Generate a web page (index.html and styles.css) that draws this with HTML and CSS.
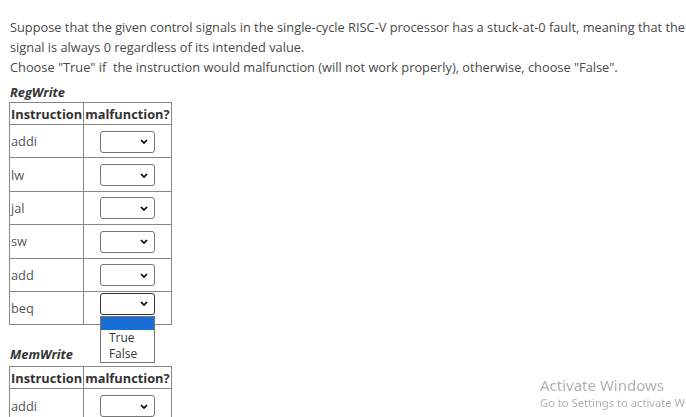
FILE: index.html
```html
<!DOCTYPE html>
<html lang="en">
<head>
    <meta charset="UTF-8">
    <title>Stuck-at-0 fault question</title>
    <link rel="stylesheet" href="styles.css">
</head>
<body>
    <div class="question">
        <p class="prompt">Suppose that the given control signals in the single-cycle RISC-V processor has a stuck-at-0 fault, meaning that the signal is always 0 regardless of its intended value.<br>Choose "True" if &nbsp;the instruction would malfunction (will not work properly), otherwise, choose "False".</p>

        <div class="signal">RegWrite</div>
        <table class="grid">
            <tr><th>Instruction</th><th>malfunction?</th></tr>
            <tr><td>addi</td><td class="pick"><span class="select"></span></td></tr>
            <tr><td>lw</td><td class="pick"><span class="select"></span></td></tr>
            <tr><td>jal</td><td class="pick"><span class="select"></span></td></tr>
            <tr><td>sw</td><td class="pick"><span class="select"></span></td></tr>
            <tr><td>add</td><td class="pick"><span class="select"></span></td></tr>
            <tr>
                <td>beq</td>
                <td class="pick top">
                    <span class="select open">
                        <ul class="menu">
                            <li class="active">&nbsp;</li>
                            <li>True</li>
                            <li>False</li>
                        </ul>
                    </span>
                </td>
            </tr>
        </table>

        <div class="signal second">MemWrite</div>
        <table class="grid">
            <tr><th>Instruction</th><th>malfunction?</th></tr>
            <tr><td>addi</td><td class="pick"><span class="select"></span></td></tr>
        </table>
    </div>

    <div class="watermark">
        <div class="wm-title">Activate Windows</div>
        <div class="wm-sub">Go to Settings to activate Windows.</div>
    </div>
</body>
</html>
```

FILE: styles.css
```css
* {
    box-sizing: border-box;
}
body {
    margin: 0;
    font-family: 'Open Sans', sans-serif;
    font-size: 12.8px;
    color: #494949;
    background: #fff;
    overflow: hidden;
}
.question {
    padding: 17px 0 0 10px;
    width: 720px;
}
.prompt {
    margin: 0;
    line-height: 20px;
    width: 690px;
}
.signal {
    margin-top: 6px;
    font-weight: 700;
    font-style: italic;
    color: #333;
    line-height: 19px;
}
.signal.second {
    margin-top: 20px;
    margin-bottom: 2px;
}
.grid {
    border-collapse: collapse;
    margin-left: -1px;
    border: 1px solid #666;
}
.grid th,
.grid td {
    border: 1px solid #888;
    padding: 0 1px;
    text-align: left;
}
.grid th {
    height: 22px;
    font-weight: 700;
    color: #333;
}
.grid td {
    height: 33.4px;
    color: #555;
}
.grid td.pick {
    text-align: center;
}
.grid td.pick.top {
    vertical-align: top;
    padding-top: 1px;
}
.select {
    position: relative;
    display: inline-block;
    width: 55px;
    height: 22px;
    margin-top: 1px;
    vertical-align: middle;
    border: 1px solid #767676;
    border-radius: 3px;
    background: #fff url("data:image/svg+xml,%3Csvg xmlns='http://www.w3.org/2000/svg' width='8' height='5'%3E%3Cpath d='M1 1l3 3 3-3' fill='none' stroke='%23000' stroke-width='1.7'/%3E%3C/svg%3E") no-repeat right 6px center;
}
.select.open {
    margin-top: 0;
    border-color: #333;
}
.menu {
    position: absolute;
    top: 22px;
    left: -1px;
    width: 55px;
    margin: 0;
    padding: 0;
    list-style: none;
    background: #fff;
    border: 1px solid #767676;
    text-align: left;
    font-size: 12px;
    color: #333;
    z-index: 2;
}
.menu li {
    height: 16px;
    line-height: 16px;
    padding-left: 8px;
}
.menu li.active {
    height: 13px;
    background: #1a6fd6;
}
.watermark {
    position: fixed;
    left: 540px;
    top: 375px;
    color: #b0b0b0;
    font-family: 'Noto Sans', sans-serif;
    white-space: nowrap;
}
.wm-title {
    font-size: 15px;
    line-height: 20px;
}
.wm-sub {
    font-size: 11.2px;
    line-height: 16px;
}
```
